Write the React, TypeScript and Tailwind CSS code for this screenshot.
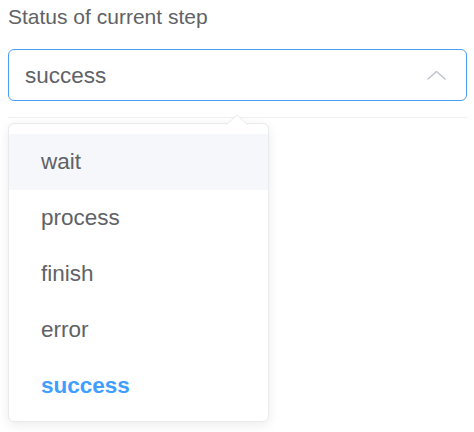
import React from "react";

const items = ["wait", "process", "finish", "error", "success"];

export default function App() {
  return (
    <div
      className="w-[474px] h-[432px] bg-white overflow-hidden"
      style={{ fontFamily: '"Liberation Sans", Arial, sans-serif' }}
    >
      <div className="pl-2 pr-[7px]">
        <div className="mt-[3px] text-[21px] leading-[28px] text-[#606266]">
          Status of current step
        </div>
        <div className="mt-[18px] h-[52px] border border-[#4a9ff5] rounded-[6px] flex items-center pl-[16px] pr-[20px]">
          <span className="flex-1 text-[22.5px] text-[#606266] leading-none pt-[2px]">
            success
          </span>
          <svg width="19" height="10" viewBox="0 0 19 10" fill="none">
            <path
              d="M1 9 L9.5 1.5 L18 9"
              stroke="#c0c4cc"
              strokeWidth="1.6"
              strokeLinecap="round"
              strokeLinejoin="round"
            />
          </svg>
        </div>
        <div className="mt-[16px] h-[1px] bg-[#eef0f3] shadow-[0_-3px_6px_rgba(0,0,0,0.03)]" />
        <div className="relative mt-[5px] w-[261px] h-[299px] bg-white border border-[#e8eaee] rounded-[6px] shadow-[0_3px_12px_rgba(0,0,0,0.08)] pt-[10px]">
          <svg
            className="absolute left-[217px] top-[-10px]"
            width="22"
            height="11"
            viewBox="0 0 22 11"
            fill="none"
          >
            <path d="M0 11 L11 1 L22 11 Z" fill="#ffffff" />
            <path d="M0.5 10.5 L11 1 L21.5 10.5" stroke="#e8eaee" strokeWidth="1" />
          </svg>
          {items.map((it, i) => (
            <div
              key={it}
              className={
                "h-[56px] flex items-center pl-[32px] text-[22.5px] " +
                (i === 0 ? "bg-[#f5f7fa] " : "") +
                (it === "success" ? "text-[#409eff] font-bold" : "text-[#606266]")
              }
            >
              {it}
            </div>
          ))}
        </div>
      </div>
    </div>
  );
}
